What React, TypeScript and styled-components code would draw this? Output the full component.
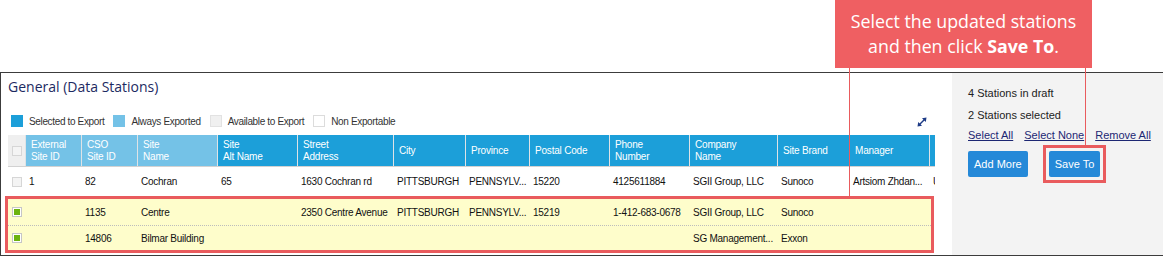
import React from "react";
import styled, { createGlobalStyle } from "styled-components";

type Column = { title: string; width: number; light?: boolean };
type Station = { checked: boolean; cells: string[] };

const columns: Column[] = [
  { title: "External\nSite ID", width: 56, light: true },
  { title: "CSO\nSite ID", width: 56, light: true },
  { title: "Site\nName", width: 80, light: true },
  { title: "Site\nAlt Name", width: 80 },
  { title: "Street\nAddress", width: 96 },
  { title: "City", width: 72 },
  { title: "Province", width: 64 },
  { title: "Postal Code", width: 80 },
  { title: "Phone\nNumber", width: 80 },
  { title: "Company\nName", width: 88 },
  { title: "Site Brand", width: 72 },
  { title: "Manager", width: 80 },
  { title: "Cont", width: 6 },
];

const firstRow: Station = {
  checked: false,
  cells: ["1", "82", "Cochran", "65", "1630 Cochran rd", "PITTSBURGH", "PENNSYLV...", "15220", "4125611884", "SGII Group, LLC", "Sunoco", "Artsiom Zhdan...", "U"],
};

const selectedRows: Station[] = [
  {
    checked: true,
    cells: ["", "1135", "Centre", "", "2350 Centre Avenue", "PITTSBURGH", "PENNSYLV...", "15219", "1-412-683-0678", "SGII Group, LLC", "Sunoco", "", ""],
  },
  {
    checked: true,
    cells: ["", "14806", "Bilmar Building", "", "", "", "", "", "", "SG Management...", "Exxon", "", ""],
  },
];

const gridTemplate = ["17px", ...columns.map((c) => `${c.width}px`)].join(" ");

const legend = [
  { label: "Selected to Export", color: "#1c9fd9", border: "#1c9fd9" },
  { label: "Always Exported", color: "#74c2e7", border: "#74c2e7" },
  { label: "Available to Export", color: "#f0f0f0", border: "#e2e2e2" },
  { label: "Non Exportable", color: "#ffffff", border: "#dcdcdc" },
];

export default function App() {
  return (
    <Page>
      <GlobalStyle />
      <TopSpace />
      <Panel>
        <Main>
          <Title>General (Data Stations)</Title>
          <LegendRow>
            <Legend>
              {legend.map((l) => (
                <LegendItem key={l.label}>
                  <Swatch $color={l.color} $border={l.border} />
                  {l.label}
                </LegendItem>
              ))}
            </Legend>
            <ExpandIcon width="10" height="11" viewBox="0 0 10 11">
              <line x1="2" y1="9" x2="8" y2="3" stroke="#1d3b86" strokeWidth="1.4" />
              <polygon points="9.5,1.5 5,2.2 8.8,6" fill="#1d3b86" />
              <polygon points="0.5,10.5 1.2,6 5,9.8" fill="#1d3b86" />
            </ExpandIcon>
          </LegendRow>
          <Table>
            <HeaderRow>
              <HeaderCheckCell>
                <Checkbox $checked={false} />
              </HeaderCheckCell>
              {columns.map((c) => (
                <HeaderCell key={c.title} $light={c.light}>
                  {c.title}
                </HeaderCell>
              ))}
            </HeaderRow>
            <Row $height={29}>
              <CheckCell>
                <Checkbox $checked={firstRow.checked} />
              </CheckCell>
              {firstRow.cells.map((v, i) => (
                <Cell key={i}>{v}</Cell>
              ))}
            </Row>
            <Highlight>
              {selectedRows.map((r, ri) => (
                <Row key={ri} $height={ri === 0 ? 26 : 24} $yellow $dotted={ri === 0}>
                  <CheckCell>
                    <Checkbox $checked={r.checked} />
                  </CheckCell>
                  {r.cells.map((v, i) => (
                    <Cell key={i}>{v}</Cell>
                  ))}
                </Row>
              ))}
            </Highlight>
          </Table>
        </Main>
        <Sidebar>
          <Info>4 Stations in draft</Info>
          <Info>2 Stations selected</Info>
          <Links>
            <TextLink href="#">Select All</TextLink>
            <TextLink href="#">Select None</TextLink>
            <TextLink href="#">Remove All</TextLink>
          </Links>
          <Actions>
            <Button>Add More</Button>
            <Marked>
              <Button>Save To</Button>
            </Marked>
          </Actions>
        </Sidebar>
      </Panel>
      <Callout>
        Select the updated stations
        <br />
        and then click <b>Save To</b>.
      </Callout>
      <Connector $left={849} $bottom={196} />
      <Connector $left={1085} $bottom={145} />
    </Page>
  );
}

const GlobalStyle = createGlobalStyle`
  body {
    margin: 0;
    background: #ffffff;
    font-family: "Liberation Sans", Arial, sans-serif;
  }
`;

const Page = styled.div`
  position: relative;
  width: 1163px;
  height: 257px;
  overflow: hidden;
`;

const TopSpace = styled.div`
  height: 72px;
`;

const Panel = styled.section`
  display: flex;
  height: 184px;
  box-sizing: border-box;
  border-top: 1px solid #3c3c3c;
  border-bottom: 1px solid #3c3c3c;
  border-left: 1px solid #3c3c3c;
`;

const Main = styled.div`
  flex: 0 0 951px;
  padding: 5px 0 0 7px;
  box-sizing: border-box;
`;

const Title = styled.h1`
  margin: 0;
  font-family: "Open Sans", "Noto Sans", sans-serif;
  font-weight: 400;
  font-size: 14px;
  line-height: 18px;
  color: #1c2a62;
`;

const LegendRow = styled.div`
  display: flex;
  align-items: center;
  justify-content: space-between;
  width: 927px;
  height: 14px;
  margin-top: 18px;
`;

const Legend = styled.div`
  display: flex;
  align-items: center;
  gap: 9px;
  padding-left: 3px;
`;

const LegendItem = styled.span`
  display: flex;
  align-items: center;
  gap: 6px;
  font-size: 10px;
  letter-spacing: -0.35px;
  color: #333;
`;

const Swatch = styled.span<{ $color: string; $border: string }>`
  width: 10px;
  height: 10px;
  background: ${(p) => p.$color};
  border: 1px solid ${(p) => p.$border};
`;

const ExpandIcon = styled.svg`
  margin-right: 8px;
`;

const Table = styled.div`
  width: 927px;
  margin-top: 7px;
`;

const HeaderRow = styled.div`
  display: grid;
  grid-template-columns: ${gridTemplate};
  height: 32px;
  border-bottom: 1px solid #d2d2d2;
  box-sizing: border-box;
`;

const HeaderCheckCell = styled.div`
  display: flex;
  align-items: center;
  justify-content: center;
  background: #efefef;
`;

const HeaderCell = styled.div<{ $light?: boolean }>`
  display: flex;
  align-items: center;
  padding-left: 5px;
  overflow: hidden;
  white-space: pre;
  font-size: 10px;
  line-height: 12px;
  letter-spacing: -0.2px;
  color: #ffffff;
  background: ${(p) => (p.$light ? "#74c2e7" : "#1c9fd9")};
  border-left: 1px solid #dfe3e6;
`;

const Highlight = styled.div`
  width: 923px;
  margin-top: 3px;
  outline: 3px solid #e95b5d;
`;

const Row = styled.div<{ $height: number; $yellow?: boolean; $dotted?: boolean }>`
  display: grid;
  grid-template-columns: ${gridTemplate};
  height: ${(p) => p.$height}px;
  background: ${(p) => (p.$yellow ? "#fefdcb" : "#ffffff")};
  border-bottom: ${(p) => (p.$dotted ? "1px dotted #bdbdbd" : "none")};
`;

const CheckCell = styled.div`
  display: flex;
  align-items: center;
  justify-content: center;
`;

const Cell = styled.div`
  display: flex;
  align-items: center;
  padding-left: 4px;
  overflow: hidden;
  white-space: nowrap;
  font-size: 10px;
  letter-spacing: -0.25px;
  color: #111;
`;

const Checkbox = styled.span<{ $checked: boolean }>`
  width: 10px;
  height: 10px;
  box-sizing: border-box;
  border: 1px solid ${(p) => (p.$checked ? "#c6c6c6" : "#d6d6d6")};
  background: ${(p) => (p.$checked ? "#ffffff" : "#f4f4f4")};
  &::after {
    content: "";
    display: ${(p) => (p.$checked ? "block" : "none")};
    width: 6px;
    height: 6px;
    margin: 1px;
    background: #6cb30d;
  }
`;

const Sidebar = styled.aside`
  flex: 1;
  background: #f3f3f3;
  padding: 9px 0 0 16px;
  font-size: 11px;
  color: #222;
`;

const Info = styled.div`
  line-height: 22px;
`;

const Links = styled.div`
  display: flex;
  gap: 11px;
  line-height: 19px;
`;

const TextLink = styled.a`
  color: #1d2773;
  text-decoration: underline;
`;

const Actions = styled.div`
  display: flex;
  align-items: center;
  gap: 15px;
`;

const Button = styled.button`
  height: 26px;
  padding: 0 6px;
  border: none;
  border-radius: 2px;
  background: #2589d8;
  color: #ffffff;
  font-family: "Liberation Sans", Arial, sans-serif;
  font-size: 11px;
`;

const Marked = styled.div`
  padding: 3px;
  border: 3px solid #e95b5d;
`;

const Callout = styled.div`
  position: absolute;
  left: 835px;
  top: 0;
  width: 257px;
  height: 68px;
  box-sizing: border-box;
  padding-top: 9px;
  background: #ef5f62;
  color: #ffffff;
  text-align: center;
  font-family: "Open Sans", "Noto Sans", sans-serif;
  font-size: 17.8px;
  line-height: 25px;
`;

const Connector = styled.div<{ $left: number; $bottom: number }>`
  position: absolute;
  left: ${(p) => p.$left}px;
  top: 68px;
  width: 1px;
  height: ${(p) => p.$bottom - 68}px;
  background: #e95b5d;
`;
